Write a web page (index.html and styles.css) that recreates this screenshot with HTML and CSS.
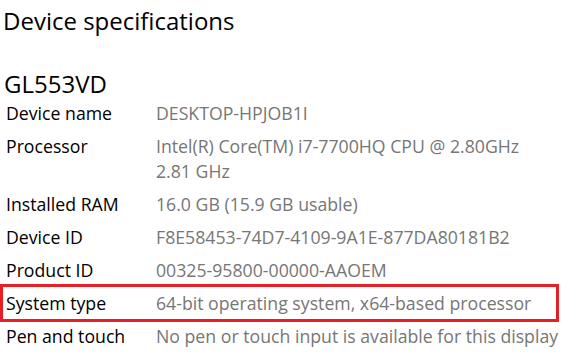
FILE: index.html
```html
<!DOCTYPE html>
<html>
<head>
<meta charset="utf-8">
<link rel="stylesheet" href="styles.css">
</head>
<body>
<div class="page">
  <h1 class="title">Device specifications</h1>
  <h2 class="model">GL553VD</h2>
  <div class="specs">
    <div class="row"><div class="label">Device name</div><div class="value">DESKTOP-HPJOB1I</div></div>
    <div class="row"><div class="label">Processor</div><div class="value">Intel(R) Core(TM) i7-7700HQ CPU @ 2.80GHz<br>2.81 GHz</div></div>
    <div class="row"><div class="label">Installed RAM</div><div class="value">16.0 GB (15.9 GB usable)</div></div>
    <div class="row"><div class="label">Device ID</div><div class="value">F8E58453-74D7-4109-9A1E-877DA80181B2</div></div>
    <div class="row"><div class="label">Product ID</div><div class="value">00325-95800-00000-AAOEM</div></div>
    <div class="row highlight"><div class="label">System type</div><div class="value">64-bit operating system, x64-based processor</div></div>
    <div class="row"><div class="label">Pen and touch</div><div class="value">No pen or touch input is available for this display</div></div>
  </div>
</div>
</body>
</html>
```
FILE: styles.css
```css
html, body {
  margin: 0;
  padding: 0;
  background: #ffffff;
}
body {
  font-family: "Open Sans", "Noto Sans", "Liberation Sans", sans-serif;
  color: #000000;
  overflow: hidden;
}
.page {
  width: 586px;
  height: 352px;
}
.title {
  margin: 0;
  padding: 5px 0 0 3px;
  font-size: 24px;
  font-weight: 400;
  line-height: 32px;
}
.model {
  margin: 0;
  padding: 33px 0 0 4px;
  font-size: 24px;
  font-weight: 400;
  line-height: 27px;
}
.specs {
  display: flex;
  flex-direction: column;
}
.row {
  display: grid;
  grid-template-columns: 150px 1fr;
  padding: 4px 0 4px 6px;
  font-size: 17.7px;
  line-height: 25px;
  white-space: nowrap;
}
.value {
  color: #767676;
}
.highlight {
  border: 3px solid #e81e25;
  margin: -3px 27px -2px 0;
  padding: 4px 0 3px 3px;
}
```
